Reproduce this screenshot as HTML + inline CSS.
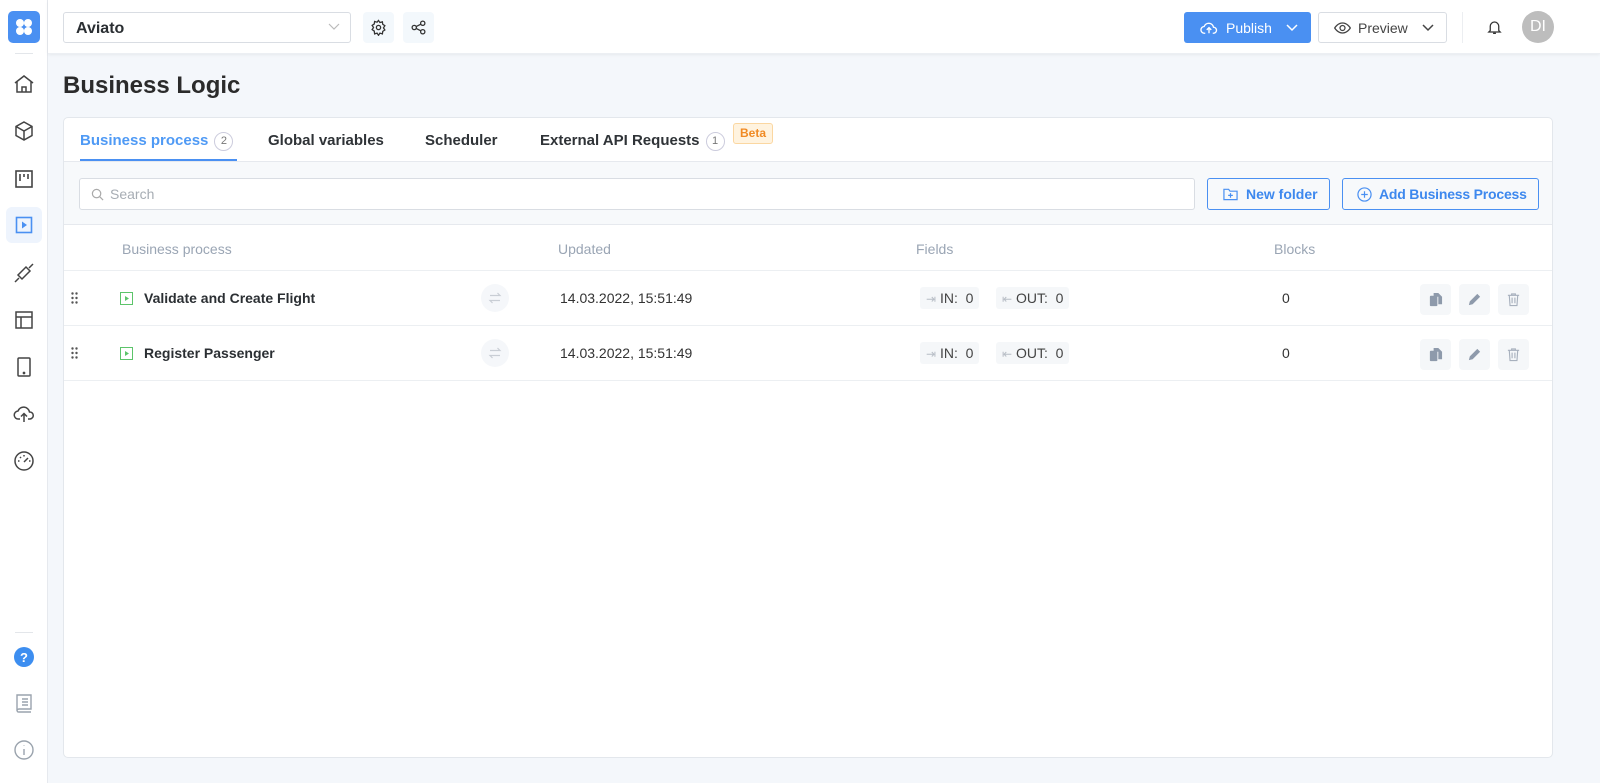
<!DOCTYPE html>
<html><head><meta charset="utf-8"><style>
*{box-sizing:border-box;margin:0;padding:0}
body{width:1600px;height:783px;overflow:hidden;background:#f4f7fb;font-family:"Liberation Sans",Helvetica,Arial,sans-serif;color:#2b2f33;position:relative}
.side{position:absolute;left:0;top:0;width:48px;height:783px;background:#fff;border-right:1px solid #e6e9ee}
.top{position:absolute;left:48px;top:0;right:0;height:54px;background:#fff;box-shadow:0 1px 3px rgba(0,0,0,.06);border-bottom:1px solid #eceff3}
.ic{position:absolute;left:12px;width:24px;height:24px}
svg{display:block}
.abs{position:absolute}
.sel{left:63px;top:12px;width:288px;height:31px;border:1px solid #d9dde3;border-radius:3px;font-size:16px;font-weight:bold;padding:7px 12px}
.sq{top:12px;width:31px;height:31px;background:#f3f8fc;border-radius:4px}
.btn{border-radius:3px;font-size:14px;display:flex;align-items:center;white-space:nowrap}
.card{position:absolute;left:63px;top:117px;width:1490px;height:641px;background:#fff;border:1px solid #e3e7ec;border-radius:5px;overflow:hidden}
.tab{position:absolute;top:14px;font-size:15px;font-weight:bold;color:#2f3337}
.badge{display:inline-block;width:19px;height:19px;border:1px solid #ccd;border-radius:50%;font-size:11px;font-weight:normal;color:#777;text-align:center;line-height:17px;margin-left:6px;vertical-align:1px}
.th{position:absolute;top:123px;font-size:14px;color:#9aa5b4}
.row{position:absolute;left:0;width:1490px;height:55px;border-top:1px solid #eceff2}
.row .t{position:absolute;top:19px;font-size:14px}
.chip{position:absolute;top:16px;height:22px;background:#f5f7f9;border-radius:3px;font-size:14px;color:#444;padding:3px 6px 0 6px}
.act{position:absolute;top:13px;width:31px;height:31px;background:#f5f7f9;border-radius:4px}
</style></head><body>
<div class="side">
  <div class="abs" style="left:8px;top:11px;width:32px;height:32px;background:#4a90f2;border-radius:5px">
    <svg width="32" height="32"><circle cx="12" cy="12" r="4" fill="#fff"/><circle cx="20" cy="12" r="4" fill="#fff"/><circle cx="12" cy="20" r="4" fill="#fff"/><circle cx="20" cy="20" r="4" fill="#fff"/></svg></div>
  <div class="abs" style="left:15px;top:53px;width:18px;height:1px;background:#e3e6ea"></div>
  <svg class="ic" style="top:72px" viewBox="0 0 24 24" fill="none" stroke="#444" stroke-width="1.5"><path d="M3 11L12 4l9 7M5 9.5V20h14V9.5M10 20v-5h4v5"/></svg>
  <svg class="ic" style="top:119px" viewBox="0 0 24 24" fill="none" stroke="#444" stroke-width="1.5"><path d="M12 3l8 4.5v9L12 21l-8-4.5v-9zM4 7.5l8 4.5 8-4.5M12 12v9"/></svg>
  <svg class="ic" style="top:167px" viewBox="0 0 24 24" fill="none" stroke="#444" stroke-width="1.6"><rect x="4" y="4" width="16" height="16"/><path d="M8 7v7M12 7v3M16 7v5"/></svg>
  <div class="abs" style="left:6px;top:207px;width:36px;height:36px;background:#eef4fd;border-radius:6px"></div>
  <svg class="ic" style="top:213px" viewBox="0 0 24 24"><rect x="4.5" y="4.5" width="15" height="15" fill="none" stroke="#4a90f2" stroke-width="1.6"/><path d="M10 8.5l5 3.5-5 3.5z" fill="#4a90f2"/></svg>
  <svg class="ic" style="top:261px" viewBox="0 0 24 24" fill="none" stroke="#444" stroke-width="1.5"><path d="M3 21l4-4M21 3l-4 4M9 11l-3 3 4 4 3-3M15 13l3-3-4-4-3 3M11 9l-2 2M15 13l-2 2"/></svg>
  <svg class="ic" style="top:308px" viewBox="0 0 24 24" fill="none" stroke="#444" stroke-width="1.5"><rect x="4" y="4" width="16" height="16"/><path d="M4 9h16M9 9v11"/></svg>
  <svg class="ic" style="top:355px" viewBox="0 0 24 24" fill="none" stroke="#444" stroke-width="1.5"><rect x="6" y="3" width="12" height="18" rx="1"/><circle cx="12" cy="18" r=".6" fill="#444"/></svg>
  <svg class="ic" style="top:402px" viewBox="0 0 24 24" fill="none" stroke="#444" stroke-width="1.5"><path d="M8 17H6.5a4 4 0 01-.5-8 6 6 0 0111.5 1 3.5 3.5 0 01.5 7H16M12 20v-8M9 14.5l3-3 3 3"/></svg>
  <svg class="ic" style="top:449px" viewBox="0 0 24 24" fill="none" stroke="#444" stroke-width="1.5"><circle cx="12" cy="12" r="9"/><path d="M12 13l4-4M6 12h1.5M17 12h1.5M12 6v1.5M8 8l1 1"/></svg>
  <div class="abs" style="left:15px;top:632px;width:18px;height:1px;background:#e3e6ea"></div>
  <svg class="ic" style="top:645px" viewBox="0 0 24 24"><circle cx="12" cy="12" r="10" fill="#3d8ef0"/><text x="12" y="17" text-anchor="middle" font-size="13" font-weight="bold" fill="#fff" font-family="Liberation Sans">?</text></svg>
  <svg class="ic" style="top:691px" viewBox="0 0 24 24" fill="none" stroke="#9aa3ad" stroke-width="1.4"><path d="M5 4h14v14H7a2 2 0 00-2 2V4zM5 20a2 2 0 002 1h12M10 8h6M10 11h6M10 14h6"/></svg>
  <svg class="ic" style="top:738px" viewBox="0 0 24 24" fill="none" stroke="#9aa3ad" stroke-width="1.4"><circle cx="12" cy="12" r="9"/><path d="M12 11v6M12 7.5v.5"/></svg>
</div>
<div class="top"></div>
<div class="abs sel">Aviato<svg class="abs" style="right:10px;top:10px" width="12" height="8" viewBox="0 0 12 8"><path d="M1 1l5 5 5-5" fill="none" stroke="#bbb" stroke-width="1.2"/></svg></div>
<div class="abs sq" style="left:363px"><svg style="margin:7px" width="17" height="17" viewBox="0 0 24 24" fill="none" stroke="#333" stroke-width="1.8"><circle cx="12" cy="12" r="3"/><path d="M12 2l2 3 3.5-1 .5 3.5 3 2-2 3 2 3-3 2-.5 3.5-3.5-1-2 3-2-3-3.5 1L6 17l-3-2 2-3-2-3 3-2 .5-3.5 3.5 1z"/></svg></div>
<div class="abs sq" style="left:403px"><svg style="margin:7px" width="17" height="17" viewBox="0 0 24 24" fill="none" stroke="#333" stroke-width="1.8"><circle cx="6" cy="12" r="3"/><circle cx="18" cy="6" r="3"/><circle cx="18" cy="18" r="3"/><path d="M8.7 10.7l6.6-3.4M8.7 13.3l6.6 3.4"/></svg></div>
<div class="abs btn" style="left:1184px;top:12px;width:127px;height:31px;background:#4a90f2;color:#fff">
  <svg style="margin:0 8px 0 16px" width="18" height="16" viewBox="0 0 24 20" fill="none" stroke="#fff" stroke-width="1.8"><path d="M7 17H6a4.5 4.5 0 01-.5-9 6.5 6.5 0 0112.5 1 4 4 0 010 8h-1M12 17v-7M9 12.5l3-3 3 3"/></svg>Publish
  <svg style="margin-left:14px" width="12" height="8" viewBox="0 0 12 8"><path d="M1 1l5 5 5-5" fill="none" stroke="#fff" stroke-width="1.5"/></svg></div>
<div class="abs btn" style="left:1318px;top:12px;width:129px;height:31px;border:1px solid #d9dde3;color:#444">
  <svg style="margin:0 7px 0 15px" width="17" height="14" viewBox="0 0 24 18" fill="none" stroke="#444" stroke-width="1.8"><path d="M1 9s4-7 11-7 11 7 11 7-4 7-11 7S1 9 1 9z"/><circle cx="12" cy="9" r="3.5"/></svg>Preview
  <svg style="margin-left:14px" width="12" height="8" viewBox="0 0 12 8"><path d="M1 1l5 5 5-5" fill="none" stroke="#444" stroke-width="1.5"/></svg></div>
<div class="abs" style="left:1462px;top:12px;width:1px;height:31px;background:#eceef1"></div>
<svg class="abs" style="left:1486px;top:18px" width="17" height="18" viewBox="0 0 24 24" fill="none" stroke="#333" stroke-width="1.8"><path d="M6 17V11a6 6 0 0112 0v6l2 2H4zM10 21h4"/></svg>
<div class="abs" style="left:1522px;top:11px;width:32px;height:32px;border-radius:50%;background:#bdbdbd;color:#fff;font-size:16px;text-align:center;line-height:32px">DI</div>
<div class="abs" style="left:63px;top:72px;font-size:24px;font-weight:bold;color:#2b2b2b">Business Logic</div>
<div class="card">
  <div class="tab" style="left:16px;color:#4f9af5">Business process<span class="badge">2</span></div>
  <div class="abs" style="left:16px;top:41px;width:157px;height:3px;background:#4a90f2"></div>
  <div class="tab" style="left:204px">Global variables</div>
  <div class="tab" style="left:361px">Scheduler</div>
  <div class="tab" style="left:476px">External API Requests<span class="badge">1</span></div>
  <div class="abs" style="left:669px;top:5px;width:40px;height:21px;background:#fff3df;border:1px solid #fbd7a1;border-radius:3px;color:#f08a24;font-size:12px;font-weight:bold;text-align:center;line-height:19px">Beta</div>
  <div class="abs" style="left:0;top:43px;width:1490px;height:64px;background:#f7f9fb;border-top:1px solid #e6e9ee;border-bottom:1px solid #e6e9ee"></div>
  <div class="abs" style="left:15px;top:60px;width:1116px;height:32px;background:#fff;border:1px solid #d9dde3;border-radius:3px;font-size:14px;color:#a7adb4;padding:7px 0 0 30px">Search
    <svg class="abs" style="left:11px;top:9px" width="13" height="13" viewBox="0 0 14 14" fill="none" stroke="#aaa" stroke-width="1.3"><circle cx="6" cy="6" r="4.5"/><path d="M9.5 9.5L13 13"/></svg></div>
  <div class="abs btn" style="left:1143px;top:60px;width:123px;height:32px;border:1px solid #4a90f2;color:#3d88ee;font-weight:bold">
    <svg style="margin:0 8px 0 15px" width="15" height="14" viewBox="0 0 16 14" fill="none" stroke="#4a90f2" stroke-width="1.3"><path d="M1 2h5l1.5 2H15v9H1zM8 6v5M5.5 8.5h5"/></svg>New folder</div>
  <div class="abs btn" style="left:1278px;top:60px;width:197px;height:32px;border:1px solid #4a90f2;color:#3d88ee;font-weight:bold;letter-spacing:-0.2px">
    <svg style="margin:0 7px 0 14px" width="15" height="15" viewBox="0 0 16 16" fill="none" stroke="#4a90f2" stroke-width="1.3"><circle cx="8" cy="8" r="7"/><path d="M8 4.5v7M4.5 8h7"/></svg>Add Business Process</div>
  <div class="th" style="left:58px">Business process</div>
  <div class="th" style="left:494px">Updated</div>
  <div class="th" style="left:852px">Fields</div>
  <div class="th" style="left:1210px">Blocks</div>
  <div class="row" style="top:152px">
    <svg class="abs" style="left:7px;top:21px" width="8" height="12"><g fill="#555"><circle cx="1.5" cy="1.5" r="1.2"/><circle cx="5.5" cy="1.5" r="1.2"/><circle cx="1.5" cy="6" r="1.2"/><circle cx="5.5" cy="6" r="1.2"/><circle cx="1.5" cy="10.5" r="1.2"/><circle cx="5.5" cy="10.5" r="1.2"/></g></svg>
    <svg class="abs" style="left:56px;top:21px" width="13" height="13"><rect x=".5" y=".5" width="12" height="12" fill="none" stroke="#5cc46a"/><path d="M5 4l4 2.5L5 9z" fill="#5cc46a"/></svg>
    <div class="t" style="left:80px;font-weight:bold">Validate and Create Flight</div>
    <div class="abs" style="left:417px;top:13px;width:28px;height:28px;border-radius:50%;background:#f5f7fa"><svg style="margin:7px" width="14" height="14" viewBox="0 0 14 14" fill="none" stroke="#c9ced5" stroke-width="1.2"><path d="M2 4.5h10L9.5 2M12 9.5H2l2.5 2.5"/></svg></div>
    <div class="t" style="left:496px;color:#333">14.03.2022, 15:51:49</div>
    <div class="chip" style="left:856px"><span style="color:#b8bec6;font-size:12px">⇥</span> IN:&nbsp; 0</div>
    <div class="chip" style="left:932px"><span style="color:#b8bec6;font-size:12px">⇤</span> OUT:&nbsp; 0</div>
    <div class="t" style="left:1218px;color:#333">0</div>
    <div class="act" style="left:1356px"><svg style="margin:8px" width="15" height="15" viewBox="0 0 16 16" fill="#8e9aab"><rect x="2" y="4" width="8" height="11" rx="1"/><path d="M6 1h5l4 4v8H11V5H6z"/></svg></div>
    <div class="act" style="left:1395px"><svg style="margin:8px" width="15" height="15" viewBox="0 0 16 16" fill="#8e9aab"><path d="M2 14l1-4 8-8 3 3-8 8z"/></svg></div>
    <div class="act" style="left:1434px"><svg style="margin:8px" width="15" height="15" viewBox="0 0 16 16" fill="none" stroke="#a7b0bd" stroke-width="1.2"><path d="M2 3.5h12M6 3.5V2h4v1.5M3.5 3.5l.8 11h7.4l.8-11M6.5 6v6M9.5 6v6"/></svg></div>
  </div>
  <div class="row" style="top:207px">
    <svg class="abs" style="left:7px;top:21px" width="8" height="12"><g fill="#555"><circle cx="1.5" cy="1.5" r="1.2"/><circle cx="5.5" cy="1.5" r="1.2"/><circle cx="1.5" cy="6" r="1.2"/><circle cx="5.5" cy="6" r="1.2"/><circle cx="1.5" cy="10.5" r="1.2"/><circle cx="5.5" cy="10.5" r="1.2"/></g></svg>
    <svg class="abs" style="left:56px;top:21px" width="13" height="13"><rect x=".5" y=".5" width="12" height="12" fill="none" stroke="#5cc46a"/><path d="M5 4l4 2.5L5 9z" fill="#5cc46a"/></svg>
    <div class="t" style="left:80px;font-weight:bold">Register Passenger</div>
    <div class="abs" style="left:417px;top:13px;width:28px;height:28px;border-radius:50%;background:#f5f7fa"><svg style="margin:7px" width="14" height="14" viewBox="0 0 14 14" fill="none" stroke="#c9ced5" stroke-width="1.2"><path d="M2 4.5h10L9.5 2M12 9.5H2l2.5 2.5"/></svg></div>
    <div class="t" style="left:496px;color:#333">14.03.2022, 15:51:49</div>
    <div class="chip" style="left:856px"><span style="color:#b8bec6;font-size:12px">⇥</span> IN:&nbsp; 0</div>
    <div class="chip" style="left:932px"><span style="color:#b8bec6;font-size:12px">⇤</span> OUT:&nbsp; 0</div>
    <div class="t" style="left:1218px;color:#333">0</div>
    <div class="act" style="left:1356px"><svg style="margin:8px" width="15" height="15" viewBox="0 0 16 16" fill="#8e9aab"><rect x="2" y="4" width="8" height="11" rx="1"/><path d="M6 1h5l4 4v8H11V5H6z"/></svg></div>
    <div class="act" style="left:1395px"><svg style="margin:8px" width="15" height="15" viewBox="0 0 16 16" fill="#8e9aab"><path d="M2 14l1-4 8-8 3 3-8 8z"/></svg></div>
    <div class="act" style="left:1434px"><svg style="margin:8px" width="15" height="15" viewBox="0 0 16 16" fill="none" stroke="#a7b0bd" stroke-width="1.2"><path d="M2 3.5h12M6 3.5V2h4v1.5M3.5 3.5l.8 11h7.4l.8-11M6.5 6v6M9.5 6v6"/></svg></div>
  </div>
  <div class="abs" style="left:0;top:262px;width:1490px;height:1px;background:#eceff2"></div>
</div>
</body></html>
